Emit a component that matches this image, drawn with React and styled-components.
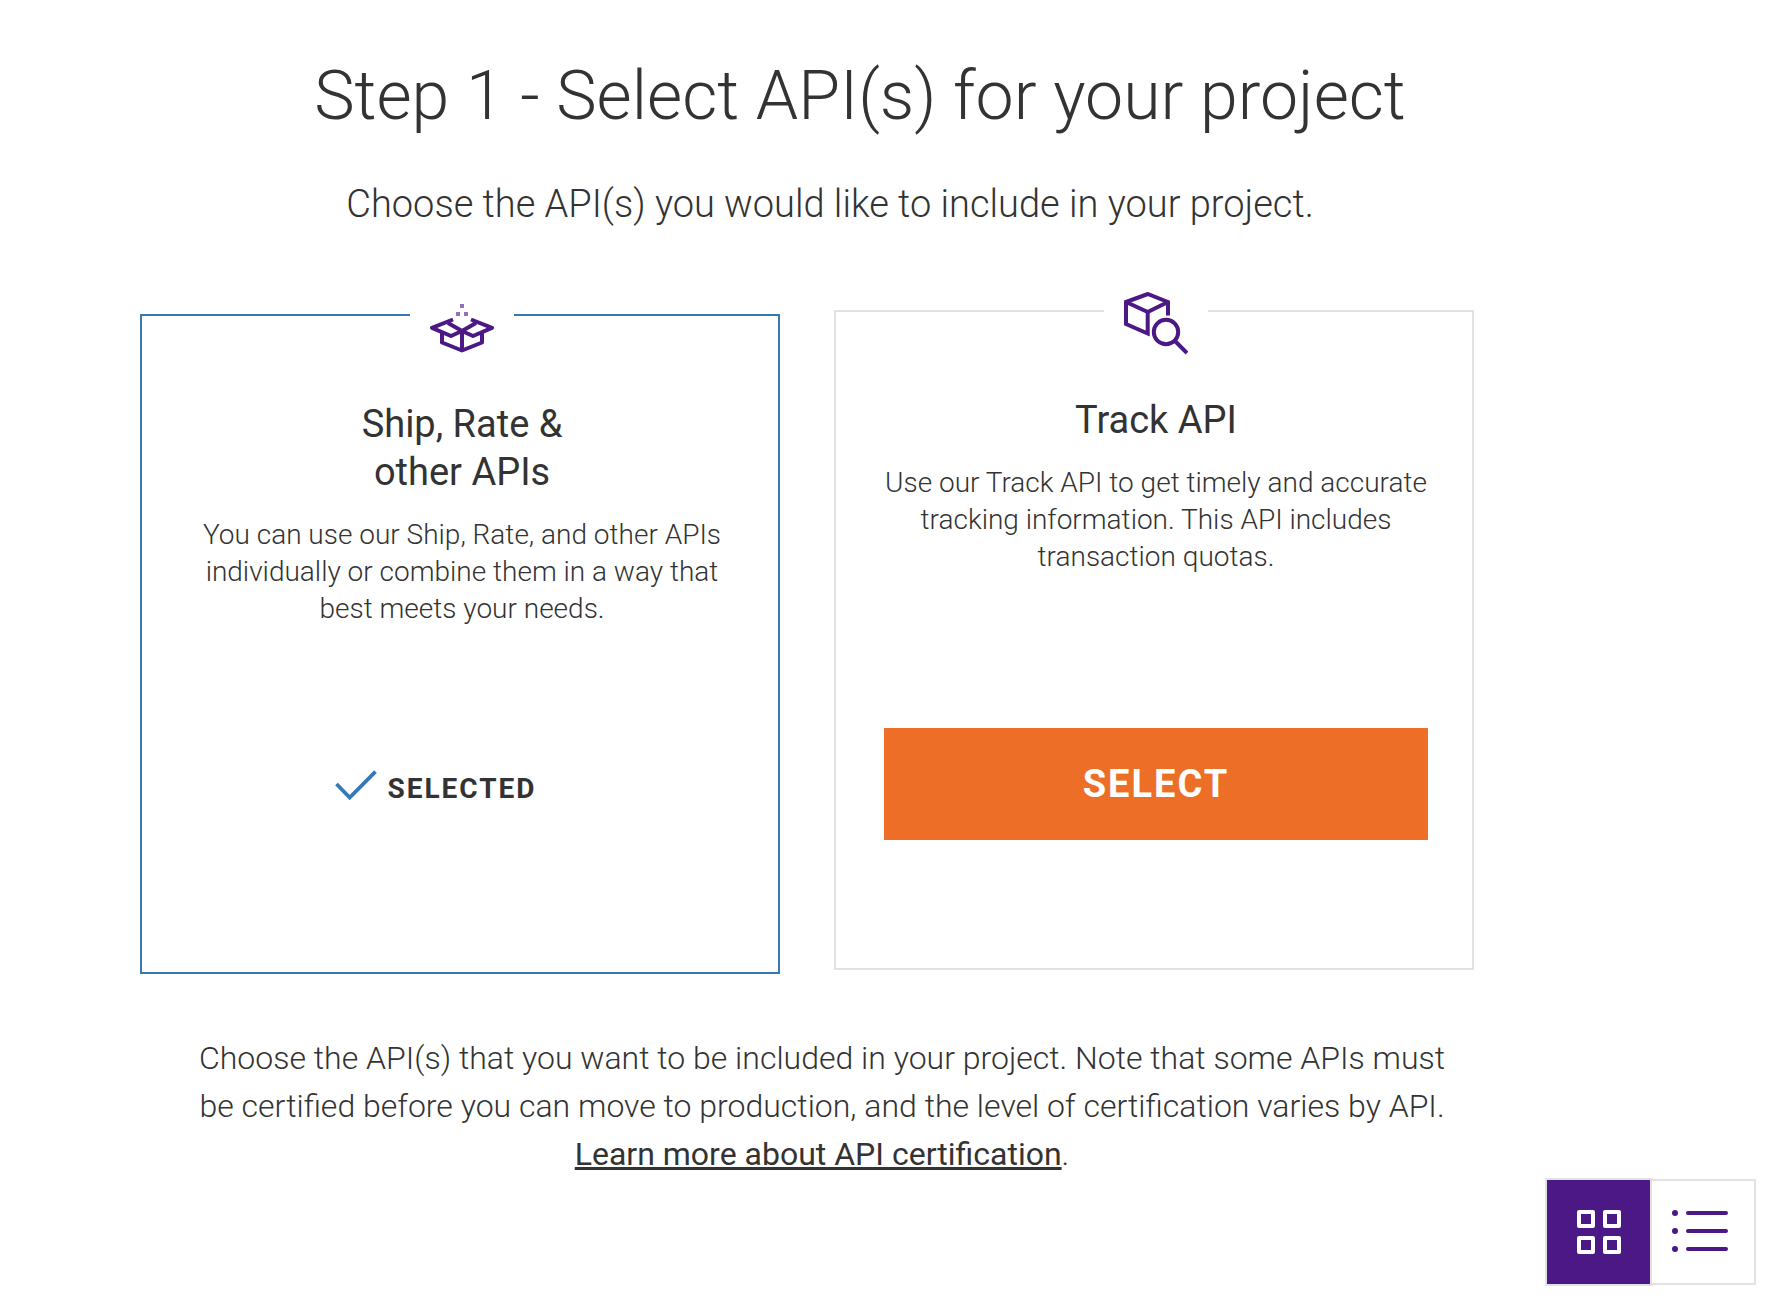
import React, { useState } from "react";
import styled, { createGlobalStyle } from "styled-components";

const apis = [
  {
    id: "ship",
    title: (
      <>
        Ship, Rate &amp;
        <br />
        other APIs
      </>
    ),
    text: "You can use our Ship, Rate, and other APIs individually or combine them in a way that best meets your needs.",
    Icon: BoxIcon,
  },
  {
    id: "track",
    title: "Track API",
    text: "Use our Track API to get timely and accurate tracking information. This API includes transaction quotas.",
    Icon: TrackIcon,
  },
];

function BoxIcon() {
  return (
    <svg width="64" height="64" viewBox="0 0 64 64" aria-hidden="true">
      <g fill="#9470b8">
        <rect x="30" y="8" width="4" height="4" />
        <rect x="26" y="16" width="4" height="4" />
        <rect x="34" y="16" width="4" height="4" />
      </g>
      <g fill="none" stroke="#4b1886" strokeWidth="4" strokeLinejoin="round">
        <path d="M23 23.5L2 31.8L21 40L32 35L18 27" />
        <path d="M41 23.5L62 31.8L43 40L32 35L46 27" />
        <path d="M12 35V46.5L32 54.5L52 46.5V35" />
        <path d="M32 35V54" />
      </g>
    </svg>
  );
}

function TrackIcon() {
  return (
    <svg width="64" height="64" viewBox="0 0 64 64" aria-hidden="true">
      <g fill="none" stroke="#4b1886" strokeWidth="4">
        <path d="M44 23.5V10L23.7 2L2 10V32L23.7 41.5V20L2 10" />
        <path d="M23.7 20L44 10" />
        <circle cx="42" cy="40" r="12.2" />
        <path d="M51 49L63 61" />
      </g>
    </svg>
  );
}

function CheckIcon() {
  return (
    <svg width="42" height="36" viewBox="0 0 42 36" aria-hidden="true">
      <path
        d="M1.5 14L14.7 27.5L40.5 1.7"
        fill="none"
        stroke="#3679b5"
        strokeWidth="3.8"
      />
    </svg>
  );
}

function GridIcon() {
  return (
    <svg width="44" height="44" viewBox="0 0 44 44" aria-hidden="true">
      <g fill="none" stroke="#fff" strokeWidth="4" strokeLinejoin="round">
        <rect x="2" y="2" width="14" height="14" />
        <rect x="28" y="2" width="14" height="14" />
        <rect x="2" y="28" width="14" height="14" />
        <rect x="28" y="28" width="14" height="14" />
      </g>
    </svg>
  );
}

function ListIcon() {
  return (
    <svg width="62" height="44" viewBox="0 0 62 44" aria-hidden="true">
      <g fill="#4b1886">
        {[3, 21, 39].map((y) => (
          <React.Fragment key={y}>
            <circle cx="3" cy={y} r="3" />
            <rect x="14" y={y - 2} width="42" height="4" rx="2" />
          </React.Fragment>
        ))}
      </g>
    </svg>
  );
}

function App() {
  const [selected, setSelected] = useState(["ship"]);
  const [view, setView] = useState("grid");

  function handleSelect(id) {
    setSelected([...selected, id]);
  }

  return (
    <Page>
      <GlobalStyle />
      <Title>Step 1 - Select API(s) for your project</Title>
      <Subtitle>
        Choose the API(s) you would like to include in your project.
      </Subtitle>
      <Cards>
        {apis.map(({ id, title, text, Icon }) => {
          const isSelected = selected.includes(id);
          return (
            <Card key={id} $selected={isSelected}>
              <IconHolder>
                <Icon />
              </IconHolder>
              <CardTitle>{title}</CardTitle>
              <CardText>{text}</CardText>
              <Action>
                {isSelected ? (
                  <Selected>
                    <CheckIcon />
                    SELECTED
                  </Selected>
                ) : (
                  <SelectButton type="button" onClick={() => handleSelect(id)}>
                    SELECT
                  </SelectButton>
                )}
              </Action>
            </Card>
          );
        })}
      </Cards>
      <Note>
        Choose the API(s) that you want to be included in your project. Note
        that some APIs must be certified before you can move to production, and
        the level of certification varies by API.{" "}
        <NoteLink href="#certification">
          Learn more about API certification
        </NoteLink>
        .
      </Note>
      <ViewToggle>
        <GridButton
          type="button"
          aria-label="Grid view"
          aria-pressed={view === "grid"}
          onClick={() => setView("grid")}
        >
          <GridIcon />
        </GridButton>
        <ListButton
          type="button"
          aria-label="List view"
          aria-pressed={view === "list"}
          onClick={() => setView("list")}
        >
          <ListIcon />
        </ListButton>
      </ViewToggle>
    </Page>
  );
}

export default App;

const GlobalStyle = createGlobalStyle`
  * {
    box-sizing: border-box;
  }

  body {
    margin: 0;
    background: #fff;
    color: #333;
    font-family: Roboto, "Liberation Sans", sans-serif;
    font-weight: 300;
  }
`;

const Page = styled.main`
  padding: 54px 26px 28px 140px;
`;

const Title = styled.h1`
  margin: 0 0 42px;
  max-width: 1440px;
  font-size: 68px;
  line-height: 84px;
  font-weight: 300;
  text-align: center;
`;

const Subtitle = styled.p`
  margin: 0 0 82px;
  max-width: 1380px;
  font-size: 38px;
  line-height: 48px;
  text-align: center;
`;

const Cards = styled.div`
  display: grid;
  grid-template-columns: 1fr 1fr;
  align-items: start;
  gap: 54px;
  max-width: 1334px;
`;

const Card = styled.section`
  position: relative;
  display: flex;
  flex-direction: column;
  min-height: 660px;
  margin-top: ${(props) => (props.$selected ? "4px" : "0")};
  padding: 84px 44px 128px 48px;
  border: 2px solid ${(props) => (props.$selected ? "#3679b5" : "#e2e2e2")};
  text-align: center;
`;

const IconHolder = styled.div`
  position: absolute;
  top: -20px;
  left: 4px;
  right: 0;
  width: 104px;
  margin: 0 auto;
  padding-left: 20px;
  background: #fff;
  text-align: left;

  svg {
    display: block;
  }
`;

const CardTitle = styled.h2`
  margin: 0 0 20px;
  font-size: 38px;
  line-height: 48px;
  font-weight: 400;
`;

const CardText = styled.p`
  margin: 0;
  font-size: 28px;
  line-height: 37px;
`;

const Action = styled.div`
  margin-top: auto;
`;

const Selected = styled.div`
  display: flex;
  align-items: center;
  justify-content: center;
  gap: 10px;
  height: 112px;
  padding-right: 52px;
  font-size: 28px;
  font-weight: 700;
  letter-spacing: 2px;
`;

const SelectButton = styled.button`
  width: 100%;
  height: 112px;
  border: none;
  background: #ed6f27;
  color: #fff;
  font-family: inherit;
  font-size: 38px;
  font-weight: 700;
  letter-spacing: 2px;
  cursor: pointer;
`;

const Note = styled.p`
  margin: 60px 0 0 46px;
  max-width: 1272px;
  font-size: 32px;
  line-height: 48px;
  text-align: center;
`;

const NoteLink = styled.a`
  display: inline-block;
  color: #333;
  font-weight: 400;
  text-decoration: underline;
  text-decoration-thickness: 3px;
  text-decoration-skip-ink: none;
  text-underline-offset: 2px;
`;

const ViewToggle = styled.div`
  display: flex;
  align-items: center;
  justify-content: flex-end;
`;

const ToggleButton = styled.button`
  display: flex;
  align-items: center;
  justify-content: center;
  padding: 0;
  border: 2px solid #e2e2e2;
  cursor: pointer;
`;

const GridButton = styled(ToggleButton)`
  width: 108px;
  height: 108px;
  background: #4b1886;
`;

const ListButton = styled(ToggleButton)`
  width: 106px;
  height: 106px;
  margin-left: -3px;
  background: #fff;
`;
